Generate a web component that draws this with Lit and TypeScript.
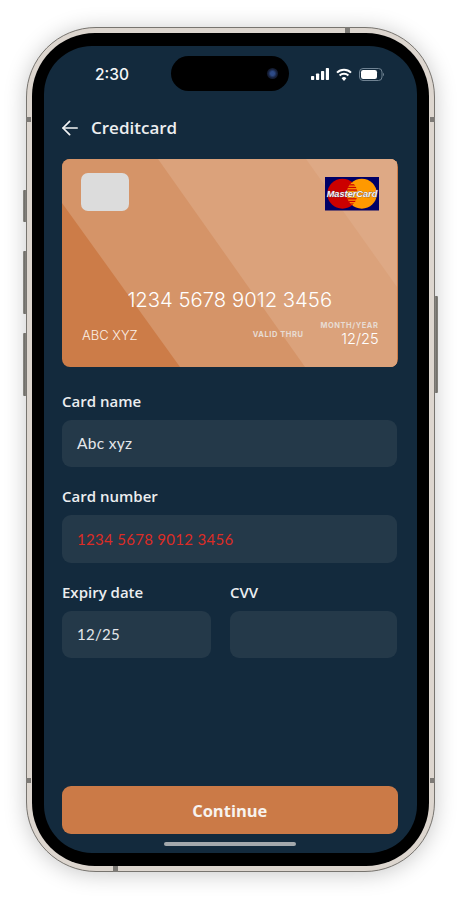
import { LitElement, html, css, svg } from "lit";
import { customElement } from "lit/decorators.js";

const mastercard = svg`<svg class="mc" viewBox="0 0 54 33.5" width="54" height="33.5" aria-label="MasterCard">
  <defs>
    <clipPath id="mcR"><circle cx="17.4" cy="16.7" r="15"/></clipPath>
    <clipPath id="mcO"><circle cx="36.8" cy="16.7" r="15"/></clipPath>
  </defs>
  <rect width="54" height="33.5" fill="#000066"/>
  <circle cx="17.4" cy="16.7" r="15" fill="#cc0000"/>
  <circle cx="36.8" cy="16.7" r="15" fill="#ff9900"/>
  <g clip-path="url(#mcR)"><g clip-path="url(#mcO)" fill="#cc0000">
    <rect x="20" y="4.6" width="14" height="1.3"/><rect x="20" y="7.2" width="14" height="1.3"/>
    <rect x="20" y="9.8" width="14" height="1.3"/><rect x="20" y="12.4" width="14" height="1.3"/>
    <rect x="20" y="21.2" width="14" height="1.3"/><rect x="20" y="23.8" width="14" height="1.3"/>
    <rect x="20" y="26.4" width="14" height="1.3"/>
  </g></g>
  <text x="27" y="20.4" text-anchor="middle" font-family="'Liberation Sans',sans-serif" font-size="9.2" font-weight="700" font-style="italic" fill="#f4f4f8" stroke="#44446a" stroke-width=".5" paint-order="stroke">MasterCard</text>
</svg>`;

@customElement("app-root")
export class AppRoot extends LitElement {
  static styles = css`
    :host { display: block; width: 460px; height: 900px; background: #fff; font-family: "Lato", "Noto Sans", sans-serif; overflow: hidden; }
    * { box-sizing: border-box; }
    .stage { padding: 27px 25px 0 26px; }
    .phone { position: relative; width: 409px; height: 845px; border-radius: 70px; background: #ddd6cf; border: 1.3px solid #77746f; padding: 5px 5px 5.5px 5px; box-shadow: 0 2px 22px rgba(0,0,0,.22); }
    .btn { position: absolute; background: linear-gradient(90deg, #8f8d88, #6d6b66 60%, #8f8d88); width: 2.6px; border-radius: 1px 0 0 1px; }
    .b1 { left: -3.8px; top: 162px; height: 32px; }
    .b2 { left: -3.8px; top: 223px; height: 63px; }
    .b3 { left: -3.8px; top: 305px; height: 63px; }
    .b4 { right: -3.8px; top: 268px; height: 97px; border-radius: 0 1px 1px 0; }
    .band { position: absolute; background: #7d7a76; }
    .bl { left: -1px; width: 5px; height: 5px; }
    .br { right: -1px; width: 5px; height: 5px; }
    .bt { top: -1px; left: 318px; width: 5px; height: 6px; }
    .bb { bottom: -1px; left: 86px; width: 5px; height: 6px; }
    .bezel { height: 100%; background: #000; border-radius: 63px; padding: 12.5px 12.5px 12.5px 12px; }
    .screen { position: relative; height: 100%; border-radius: 48px; background: #132a3d; color: #fff; display: flex; flex-direction: column; padding: 0 19px 7px 18px; overflow: hidden; }

    .island { position: absolute; left: 127px; top: 10px; width: 118px; height: 35px; border-radius: 18px; background: #000; }
    .lens { position: absolute; right: 11px; top: 12px; width: 11px; height: 11px; border-radius: 50%; background: radial-gradient(circle, #2d4a86 0 25%, #16203a 55%, #0c0e14 100%); }
    .status { height: 56px; display: flex; align-items: center; justify-content: space-between; padding: 0 14px 0 33px; flex: none; }
    .time { font-size: 15.5px; font-weight: 500; font-family: "Inter", sans-serif; color: #f5f6f7; margin: 1px 0 0 0; }
    .sys { display: flex; align-items: center; gap: 7px; margin-top: 1px; }

    .head { display: flex; align-items: center; gap: 13px; height: 24px; margin-top: 14px; flex: none; }
    .title { font-size: 17px; font-weight: 600; color: #eceef0; font-family: "Open Sans", sans-serif; }

    .card { position: relative; flex: none; height: 208px; margin-top: 19px; border-radius: 8px; overflow: hidden; background: #cc7c48; color: #fff; display: flex; flex-direction: column; padding: 14px 19px 19px 20px; font-family: "Inter", sans-serif; }
    .bg { position: absolute; inset: 0; }
    .card > :not(.bg) { position: relative; }
    .top { display: flex; justify-content: space-between; align-items: flex-start; margin-left: -1px; }
    .chip { width: 48px; height: 38px; border-radius: 7px; background: #dcdcdc; }
    .mc { display: block; margin-top: 4px; overflow: visible; }
    .num { text-align: center; font-size: 20.3px; font-weight: 350; margin: 77px 0 0 -1px; line-height: 24px; white-space: nowrap; }
    .bot { display: flex; align-items: flex-end; margin-top: auto; }
    .holder { font-size: 13px; font-weight: 300; color: #fbefe6; line-height: 18px; margin-bottom: 4px; }
    .valid { margin-left: auto; font-size: 7.5px; font-weight: 700; letter-spacing: .55px; color: #e8dcd3; line-height: 9px; margin-bottom: 8.5px; }
    .exp { margin-left: 17px; display: flex; flex-direction: column; align-items: flex-end; }
    .exp small { font-size: 7.5px; font-weight: 700; letter-spacing: .55px; color: #e8dcd3; line-height: 10px; }
    .exp b { font-size: 14.5px; font-weight: 300; line-height: 16.5px; }

    .form { display: grid; grid-template-columns: 149px 167px; column-gap: 19px; row-gap: 19px; margin-top: 24px; flex: none; }
    .f { display: flex; flex-direction: column; gap: 8px; }
    .wide { grid-column: 1 / -1; }
    label { font-family: "Open Sans", sans-serif; font-size: 15px; font-weight: 600; line-height: 21px; color: #eceef0; height: 21px; }
    .input { height: 47.5px; border-radius: 9px; background: #243949; padding: 0 15px; display: flex; align-items: center; font-size: 15.5px; color: #e4e7ea; letter-spacing: .3px; }
    .digits { font-size: 15px; }
    .err { color: #dc2c25; }

    .spacer { flex: 1; }
    .cta { flex: none; height: 48px; border-radius: 9px; border: 0; background: #cb7a47; color: #f7f3ef; font: 700 16.5px "Open Sans", sans-serif; }
    .home { flex: none; width: 132px; height: 4px; border-radius: 2px; background: #a3a8ac; margin: 8px auto 0; }
  `;

  render() {
    return html`<div class="stage"><div class="phone">
      <i class="btn b1"></i><i class="btn b2"></i><i class="btn b3"></i><i class="btn b4"></i>
      <i class="band bl" style="top:89px"></i><i class="band br" style="top:89px"></i>
      <i class="band bl" style="bottom:88px"></i><i class="band br" style="bottom:88px"></i>
      <i class="band bt"></i><i class="band bb"></i>
      <div class="bezel"><div class="screen">
        <div class="island"><i class="lens"></i></div>
        <div class="status">
          <span class="time">2:30</span>
          <div class="sys">
            <svg width="18" height="12" viewBox="0 0 18 12" fill="#fff"><rect x="0" y="8" width="3.2" height="4" rx=".7"/><rect x="5" y="5.5" width="3.2" height="6.5" rx=".7"/><rect x="10" y="3" width="3.2" height="9" rx=".7"/><rect x="14.8" y="0" width="3.2" height="12" rx=".7"/></svg>
            <svg width="16" height="13" viewBox="0 0 16 13" fill="none" stroke="#fff" stroke-width="2"><path d="M1 4.6a10 10 0 0 1 14 0"/><path d="M3.6 7.6a6.4 6.4 0 0 1 8.8 0"/><path d="M8 13 5.6 10.3a3.3 3.3 0 0 1 4.8 0Z" fill="#fff" stroke="none"/></svg>
            <svg width="25" height="13" viewBox="0 0 25 13"><rect x=".5" y=".5" width="22.5" height="12" rx="3.5" fill="none" stroke="#6f8292"/><rect x="2" y="2" width="16" height="9" rx="2.2" fill="#fff"/><path d="M24 4.8c.7.3 1 .9 1 1.7s-.3 1.4-1 1.7z" fill="#6f8292"/></svg>
          </div>
        </div>
        <div class="head">
          <svg width="16" height="16" viewBox="0 0 16 16" fill="none" stroke="#f2f3f4" stroke-width="1.7" stroke-linecap="round" stroke-linejoin="round"><path d="M15.2 8H1.2"/><path d="M7.6 1.3 1 8l6.6 6.7"/></svg>
          <span class="title">Creditcard</span>
        </div>
        <div class="card">
          <svg class="bg" viewBox="0 0 335 208" width="335" height="208" preserveAspectRatio="none">
            <polygon points="0,0 335,0 335,208 118,208 0,44" fill="#d59468"/>
            <polygon points="96,0 335,0 335,208 243,208" fill="#dba27b"/>
            <polygon points="244,0 335,0 335,128" fill="#dea985"/>
          </svg>
          <div class="top"><div class="chip"></div>${mastercard}</div>
          <div class="num">1234 5678 9012 3456</div>
          <div class="bot">
            <span class="holder">ABC XYZ</span>
            <span class="valid">VALID THRU</span>
            <div class="exp"><small>MONTH/YEAR</small><b>12/25</b></div>
          </div>
        </div>
        <div class="form">
          <div class="f wide"><label>Card name</label><div class="input">Abc xyz</div></div>
          <div class="f wide"><label>Card number</label><div class="input digits err">1234 5678 9012 3456</div></div>
          <div class="f"><label>Expiry date</label><div class="input digits">12/25</div></div>
          <div class="f"><label>CVV</label><div class="input"></div></div>
        </div>
        <div class="spacer"></div>
        <button class="cta">Continue</button>
        <div class="home"></div>
      </div></div>
    </div></div>`;
  }
}
